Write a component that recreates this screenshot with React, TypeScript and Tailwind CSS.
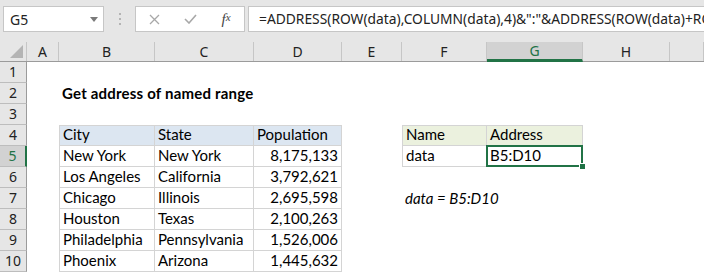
import React from 'react';

type Col = { key: string; w: number };

const cols: Col[] = [
  { key: 'A', w: 32 },
  { key: 'B', w: 96 },
  { key: 'C', w: 99 },
  { key: 'D', w: 88 },
  { key: 'E', w: 60 },
  { key: 'F', w: 85 },
  { key: 'G', w: 96 },
  { key: 'H', w: 87 },
  { key: 'I', w: 40 },
];

const cities = [
  ['New York', 'New York', '8,175,133'],
  ['Los Angeles', 'California', '3,792,621'],
  ['Chicago', 'Illinois', '2,695,598'],
  ['Houston', 'Texas', '2,100,263'],
  ['Philadelphia', 'Pennsylvania', '1,526,006'],
  ['Phoenix', 'Arizona', '1,445,632'],
];

const gridCols = 'grid grid-cols-[27px_32px_96px_99px_88px_60px_85px_96px_87px_1fr]';
const cellBase = 'h-[21px] flex items-end pb-[3px] px-[3px] whitespace-nowrap leading-[16px]';
const tblBorder = 'border-b border-r border-[#d4d4d4]';

const formula = '=ADDRESS(ROW(data),COLUMN(data),4)&":"&ADDRESS(ROW(data)+ROWS(data)-1,COLUMN(data)+COLUMNS(data)-1,4)';

const Cell: React.FC<{ row: number; col: string }> = ({ row, col }) => {
  // table B4:D10
  if (row >= 4 && ['B', 'C', 'D'].includes(col)) {
    const isHead = row === 4;
    const i = ['B', 'C', 'D'].indexOf(col);
    const text = isHead ? ['City', 'State', 'Population'][i] : cities[row - 5]?.[i];
    const right = !isHead && col === 'D';
    return (
      <div
        className={`${cellBase} ${tblBorder} ${isHead ? 'bg-[#dce6f1] border-t' : ''} ${col === 'B' ? 'border-l' : ''} ${right ? 'justify-end' : ''}`}
      >
        {text}
      </div>
    );
  }
  // lookup F4:G5
  if ((row === 4 || row === 5) && (col === 'F' || col === 'G')) {
    const isHead = row === 4;
    const text = isHead ? (col === 'F' ? 'Name' : 'Address') : col === 'F' ? 'data' : 'B5:D10';
    const selected = row === 5 && col === 'G';
    return (
      <div
        className={`${cellBase} ${tblBorder} relative ${isHead ? 'bg-[#ebf1de] border-t' : ''} ${col === 'F' ? 'border-l' : ''}`}
      >
        {text}
        {selected && (
          <>
            <div className="absolute -left-[1px] -top-[1px] -right-[1px] -bottom-[1px] border-2 border-[#217346]" />
            <div className="absolute -right-[4px] -bottom-[4px] w-[7px] h-[7px] bg-[#217346] border border-white" />
          </>
        )}
      </div>
    );
  }
  if (row === 2 && col === 'B') {
    return <div className={`${cellBase} font-bold tracking-[0.2px]`}>Get address of named range</div>;
  }
  if (row === 7 && col === 'F') {
    return <div className={`${cellBase} italic`}>data = B5:D10</div>;
  }
  return <div className="h-[21px]" />;
};

const App: React.FC = () => {
  const rows = Array.from({ length: 10 }, (_, i) => i + 1);

  return (
    <div className="w-[704px] h-[274px] overflow-hidden bg-white font-['Lato',sans-serif] text-[15px] text-black">
      {/* formula bar */}
      <div className="bg-[#e6e6e6] h-[42px] pt-[6px] flex items-start">
        <div className="ml-[3px] w-[101px] h-[26px] bg-white border border-[#c6c6c6] flex items-center justify-between pl-[6px] pr-[5px] font-['Noto_Sans',sans-serif] text-[14px] text-[#222]">
          <span>G5</span>
          <svg width="8" height="5" viewBox="0 0 8 5">
            <path d="M0 0h8L4 5z" fill="#7a7a7a" />
          </svg>
        </div>
        <div className="w-[31px] h-[26px] flex flex-col items-center justify-center gap-[3px]">
          <span className="w-[2px] h-[2px] bg-[#b4b4b4]" />
          <span className="w-[2px] h-[2px] bg-[#b4b4b4]" />
          <span className="w-[2px] h-[2px] bg-[#b4b4b4]" />
        </div>
        <div className="w-[110px] h-[26px] bg-white border border-[#c6c6c6] flex items-center">
          <div className="w-[36px] flex justify-center">
            <svg width="11" height="11" viewBox="0 0 11 11">
              <path d="M1 1l9 9M10 1l-9 9" stroke="#a8a8a8" strokeWidth="1.3" />
            </svg>
          </div>
          <div className="w-[36px] flex justify-center">
            <svg width="13" height="10" viewBox="0 0 13 10">
              <path d="M1 5l4 4 7-8" stroke="#a8a8a8" strokeWidth="1.6" fill="none" />
            </svg>
          </div>
          <div className="w-[36px] flex justify-center font-['Liberation_Serif',serif] italic text-[15px] text-[#444] leading-none">
            f<span className="text-[11px]">x</span>
          </div>
        </div>
        <div className="ml-[3px] flex-1 min-w-0 -mr-[4px] h-[26px] bg-white border border-[#c6c6c6] flex items-center pl-[10px] overflow-hidden whitespace-nowrap font-['Noto_Sans',sans-serif] text-[13.8px] text-[#222]">
          {formula}
        </div>
      </div>

      {/* column headers */}
      <div className={`${gridCols} h-[20px] bg-[#e6e6e6] border-b border-[#9b9b9b] font-['Noto_Sans',sans-serif] text-[14px] text-[#222]`}>
        <div className="flex items-end justify-end pr-[3px] pb-[3px] border-r border-[#c6c6c6]">
          <svg width="13" height="13" viewBox="0 0 13 13">
            <path d="M13 0V13H0z" fill="#b4b4b4" />
          </svg>
        </div>
        {cols.map((c) => (
          <div
            key={c.key}
            className={
              c.key === 'G'
                ? 'flex items-center justify-center bg-[#d2d2d2] text-[#217346] border-r border-[#c6c6c6] border-b-[3px] border-b-[#217346] -mb-[1px] leading-none'
                : 'flex items-center justify-center border-r border-[#c6c6c6] leading-none'
            }
          >
            {c.key === 'I' ? '' : c.key}
          </div>
        ))}
      </div>

      {/* rows */}
      {rows.map((r) => (
        <div key={r} className={gridCols}>
          <div
            className={
              r === 5
                ? 'h-[21px] flex items-center justify-center bg-[#d2d2d2] text-[#217346] border-b border-[#bdbdbd] border-r-2 border-r-[#217346] font-["Noto_Sans",sans-serif] text-[14px] leading-none'
                : 'h-[21px] flex items-center justify-center bg-[#e6e6e6] text-[#222] border-b border-[#bdbdbd] border-r border-r-[#9b9b9b] font-["Noto_Sans",sans-serif] text-[14px] leading-none'
            }
          >
            {r}
          </div>
          {cols.map((c) => (
            <Cell key={c.key} row={r} col={c.key} />
          ))}
        </div>
      ))}
    </div>
  );
};

export default App;
